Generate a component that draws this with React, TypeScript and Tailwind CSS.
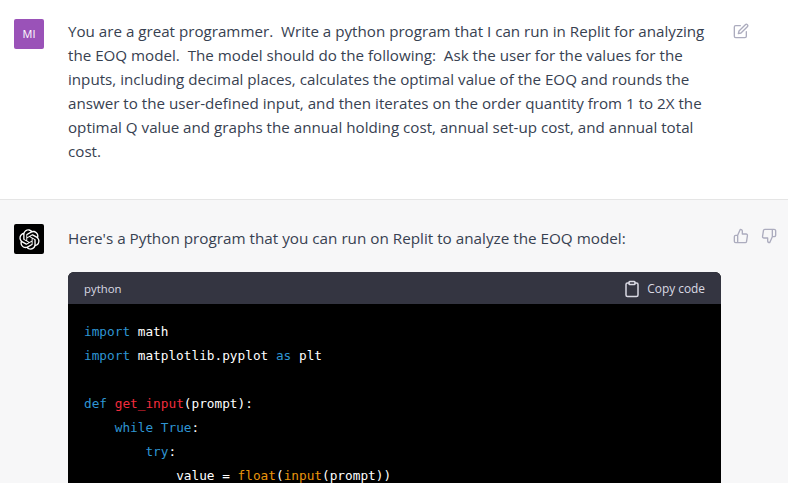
import { FiClipboard, FiEdit, FiThumbsDown, FiThumbsUp } from "react-icons/fi";

const kw = "text-[#2e95d3]";
const fn = "text-[#f22c3d]";
const bi = "text-[#e9950c]";

function OpenAILogo() {
  return (
    <svg viewBox="0 0 41 41" fill="none" className="w-[21px] h-[21px]">
      <path
        fill="currentColor"
        d="M37.5324 16.8707C37.9808 15.5241 38.1363 14.0974 37.9886 12.6859C37.8409 11.2744 37.3934 9.91076 36.676 8.68622C35.6126 6.83404 33.9882 5.3676 32.0373 4.4985C30.0864 3.62941 27.9098 3.40259 25.8215 3.85078C24.8796 2.7893 23.7219 1.94125 22.4257 1.36341C21.1295 0.785575 19.7249 0.491269 18.3058 0.500197C16.1708 0.495044 14.0893 1.16803 12.3614 2.42214C10.6335 3.67624 9.34853 5.44666 8.6917 7.47815C7.30085 7.76286 5.98686 8.3414 4.8377 9.17505C3.68854 10.0087 2.73073 11.0782 2.02839 12.312C0.956464 14.1591 0.498905 16.2988 0.721698 18.4228C0.944492 20.5467 1.83612 22.5449 3.268 24.1293C2.81966 25.4759 2.66413 26.9026 2.81182 28.3141C2.95951 29.7256 3.40701 31.0892 4.12437 32.3138C5.18791 34.1659 6.8123 35.6322 8.76321 36.5013C10.7141 37.3704 12.8907 37.5973 14.9789 37.1492C15.9208 38.2107 17.0786 39.0587 18.3747 39.6366C19.6709 40.2144 21.0755 40.5087 22.4946 40.4998C24.6307 40.5054 26.7133 39.8321 28.4418 38.5772C30.1704 37.3223 31.4556 35.5506 32.1119 33.5179C33.5027 33.2332 34.8167 32.6547 35.9659 31.821C37.115 30.9874 38.0728 29.9178 38.7752 28.684C39.8458 26.8371 40.3023 24.6979 40.0789 22.5748C39.8556 20.4517 38.9639 18.4544 37.5324 16.8707ZM22.4978 37.8849C20.7443 37.8874 19.0459 37.2733 17.6994 36.1501C17.7601 36.117 17.8666 36.0586 17.936 36.0161L25.9004 31.4156C26.1003 31.3019 26.2663 31.137 26.3813 30.9378C26.4964 30.7386 26.5563 30.5124 26.5549 30.2825V19.0542L29.9213 20.998C29.9389 21.0068 29.9541 21.0198 29.9656 21.0359C29.977 21.052 29.9842 21.0707 29.9867 21.0902V30.3889C29.9842 32.375 29.1946 34.2791 27.7909 35.6841C26.3872 37.0892 24.4838 37.8806 22.4978 37.8849ZM6.39227 31.0064C5.51397 29.4888 5.19742 27.7107 5.49804 25.9832C5.55718 26.0187 5.66048 26.0818 5.73461 26.1244L13.699 30.7248C13.8975 30.8408 14.1233 30.902 14.3532 30.902C14.583 30.902 14.8088 30.8408 15.0073 30.7248L24.731 25.1103V28.9979C24.7321 29.0177 24.7283 29.0376 24.7199 29.0556C24.7115 29.0736 24.6988 29.0893 24.6829 29.1012L16.6317 33.7497C14.9096 34.7416 12.8643 35.0097 10.9447 34.4954C9.02506 33.9811 7.38785 32.7263 6.39227 31.0064ZM4.29707 13.6194C5.17156 12.0998 6.55279 10.9364 8.19885 10.3327C8.19885 10.4013 8.19491 10.5228 8.19491 10.6071V19.808C8.19351 20.0378 8.25334 20.2638 8.36823 20.4629C8.48312 20.6619 8.64893 20.8267 8.84863 20.9404L18.5723 26.5542L15.206 28.4979C15.1894 28.5089 15.1703 28.5155 15.1505 28.5173C15.1307 28.5191 15.1107 28.516 15.0924 28.5082L7.04046 23.8557C5.32135 22.8601 4.06716 21.2235 3.55289 19.3046C3.03862 17.3858 3.30624 15.3413 4.29707 13.6194ZM31.955 20.0556L22.2312 14.4411L25.5976 12.4981C25.6142 12.4872 25.6333 12.4805 25.6531 12.4787C25.6729 12.4769 25.6928 12.4801 25.7111 12.4879L33.7631 17.1364C34.9967 17.849 36.0017 18.8982 36.6606 20.1613C37.3194 21.4244 37.6047 22.849 37.4832 24.2684C37.3617 25.6878 36.8382 27.0432 35.9743 28.1759C35.1103 29.3086 33.9415 30.1717 32.6047 30.6641C32.6047 30.5947 32.6047 30.4733 32.6047 30.3889V21.188C32.6066 20.9586 32.5474 20.7328 32.4332 20.5338C32.319 20.3348 32.154 20.1698 31.955 20.0556ZM35.3055 15.0128C35.2464 14.9765 35.1431 14.9142 35.069 14.8717L27.1045 10.2712C26.906 10.1554 26.6803 10.0943 26.4504 10.0943C26.2206 10.0943 25.9948 10.1554 25.7963 10.2712L16.0726 15.8858V11.9982C16.0715 11.9783 16.0753 11.9585 16.0837 11.9405C16.0921 11.9225 16.1048 11.9068 16.1207 11.8949L24.1719 7.25025C25.4053 6.53903 26.8158 6.19376 28.2383 6.25482C29.6608 6.31589 31.0364 6.78077 32.2044 7.59508C33.3723 8.40939 34.2842 9.53945 34.8334 10.8531C35.3826 12.1667 35.5464 13.6095 35.3055 15.0128ZM14.2424 21.9419L10.8752 19.9981C10.8576 19.9893 10.8423 19.9763 10.8309 19.9602C10.8195 19.9441 10.8122 19.9254 10.8098 19.9058V10.6071C10.8107 9.18295 11.2173 7.78848 11.9819 6.58696C12.7466 5.38544 13.8377 4.42659 15.1275 3.82264C16.4173 3.21869 17.8524 2.99464 19.2649 3.1767C20.6775 3.35876 22.0089 3.93941 23.1034 4.85067C23.0427 4.88379 22.937 4.94215 22.8668 4.98473L14.9024 9.58517C14.7025 9.69878 14.5366 9.86356 14.4215 10.0626C14.3065 10.2616 14.2466 10.4877 14.2479 10.7175L14.2424 21.9419ZM16.071 17.9991L20.4018 15.4978L24.7325 17.9975V22.9985L20.4018 25.4983L16.071 22.9985V17.9991Z"
      />
    </svg>
  );
}

export default function App() {
  return (
    <main className="h-[483px] overflow-hidden bg-[#f7f7f8] text-[#374151] font-['Open_Sans',sans-serif] text-[15.17px] leading-6">
      <section className="flex bg-white border-b border-[#e5e5e5] pt-[19px] pl-[14px] h-[200px]">
        <div className="w-[30px] h-[30px] rounded-[2px] bg-[#9a52b8] flex items-center justify-center text-white text-[11px] shrink-0">
          MI
        </div>
        <p className="ml-6 w-[653px] whitespace-pre-wrap">
          You are a great programmer.  Write a python program that I can run in Replit for analyzing the EOQ model.  The model should do the following:  Ask the user for the values for the inputs, including decimal places, calculates the optimal value of the EOQ and rounds the answer to the user-defined input, and then iterates on the order quantity from 1 to 2X the optimal Q value and graphs the annual holding cost, annual set-up cost, and annual total cost.
        </p>
        <FiEdit className="ml-3 mt-1 w-4 h-4 text-[#acacbe] shrink-0" />
      </section>
      <section className="flex pt-6 pl-[14px]">
        <div className="w-[30px] h-[30px] rounded-[2px] bg-black flex items-center justify-center text-white shrink-0">
          <OpenAILogo />
        </div>
        <div className="ml-6 w-[653px]">
          <p className="mt-[2px] text-[15.25px]">Here's a Python program that you can run on Replit to analyze the EOQ model:</p>
          <div className="mt-[22px] rounded-t-md overflow-hidden bg-black">
            <div className="h-8 bg-[#343541] flex items-center justify-between pl-4 pr-4 pt-[2px] text-xs text-[#d9d9e3]">
              <span className="text-[11.4px]">python</span>
              <span className="flex items-center gap-[6px] -mt-[1px] text-[11.9px]">
                <FiClipboard className="w-[18px] h-[18px]" />
                Copy code
              </span>
            </div>
            <pre className="p-4 text-white">
              <code className="block font-['DejaVu_Sans_Mono',monospace] text-[12.75px] leading-6">
                <span className={kw}>import</span> math{"\n"}
                <span className={kw}>import</span> matplotlib.pyplot <span className={kw}>as</span> plt{"\n"}
                {"\n"}
                <span className={kw}>def</span> <span className={fn}>get_input</span>(prompt):{"\n"}
                {"    "}<span className={kw}>while</span> <span className={kw}>True</span>:{"\n"}
                {"        "}<span className={kw}>try</span>:{"\n"}
                {"            "}value = <span className={bi}>float</span>(<span className={bi}>input</span>(prompt))
              </code>
            </pre>
          </div>
        </div>
        <div className="ml-3 mt-1 flex gap-3 text-[#acacbe]">
          <FiThumbsUp className="w-4 h-4" />
          <FiThumbsDown className="w-4 h-4" />
        </div>
      </section>
    </main>
  );
}
